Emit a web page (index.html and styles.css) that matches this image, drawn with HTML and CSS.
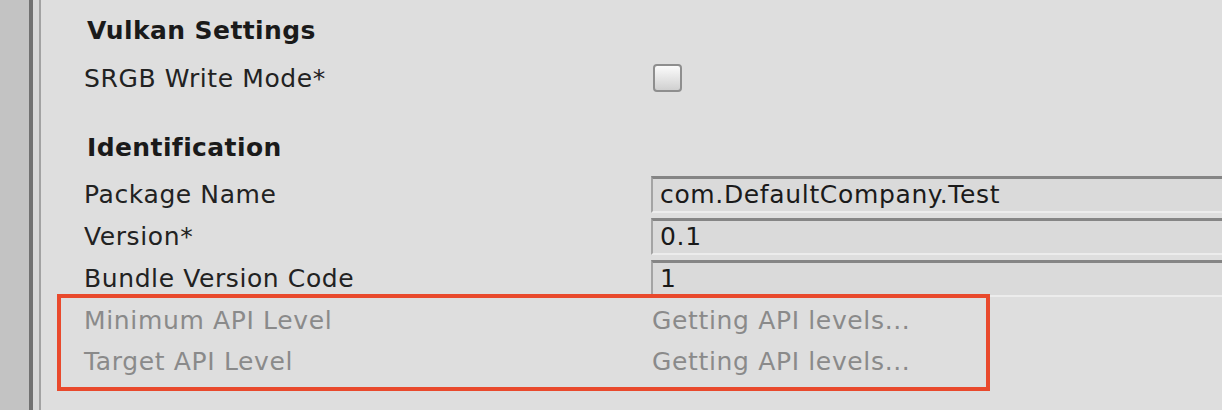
FILE: index.html
```html
<!DOCTYPE html>
<html lang="en">
<head>
<meta charset="utf-8">
<title>Player Settings</title>
<link rel="stylesheet" href="styles.css">
</head>
<body>
<div class="window">
  <div class="side"></div>
  <div class="split"></div>
  <main class="panel">
    <div class="row header-row first"><h2 class="header">Vulkan Settings</h2></div>
    <div class="row check-row">
      <span class="label">SRGB Write Mode*</span>
      <span class="value"><span class="checkbox"></span></span>
    </div>
    <div class="row header-row second"><h2 class="header">Identification</h2></div>
    <div class="row field-row pkg">
      <span class="label">Package Name</span>
      <span class="value"><span class="field">com.DefaultCompany.Test</span></span>
    </div>
    <div class="row field-row">
      <span class="label">Version*</span>
      <span class="value"><span class="field">0.1</span></span>
    </div>
    <div class="row field-row">
      <span class="label">Bundle Version Code</span>
      <span class="value"><span class="field">1</span></span>
    </div>
    <div class="disabled-group">
      <div class="row disabled-row">
        <span class="label">Minimum API Level</span>
        <span class="value text">Getting API levels...</span>
      </div>
      <div class="row disabled-row last">
        <span class="label">Target API Level</span>
        <span class="value text">Getting API levels...</span>
      </div>
    </div>
  </main>
</div>
</body>
</html>
```

FILE: styles.css
```css
html, body {
  margin: 0;
  padding: 0;
  width: 1222px;
  height: 410px;
  overflow: hidden;
  background: #dedede;
}

.window {
  display: flex;
  height: 410px;
  font-family: "DejaVu Sans", Verdana, sans-serif;
  color: #222222;
}

.side {
  width: 29px;
  flex: none;
  background: #c3c3c3;
  border-right: 4px solid #717171;
}

.split {
  width: 6px;
  flex: none;
  background: #d8d8d8;
  border-right: 2px solid #a2a2a2;
}

.panel {
  flex: 1;
  min-width: 0;
  padding-left: 43px;
  background: #dedede;
}

.row {
  display: flex;
  align-items: center;
  height: 42px;
  font-size: 25px;
  letter-spacing: 0.6px;
  white-space: nowrap;
}

.header-row.first {
  height: 60px;
}

.header-row.second {
  margin-top: 30px;
}

.header {
  margin: 0 0 0 3px;
  font-size: 25px;
  font-weight: bold;
  letter-spacing: 0.4px;
  color: #1a1a1a;
}

.check-row {
  height: 36px;
}

.pkg {
  margin-top: 5px;
}

.label {
  width: 567px;
  flex: none;
}

.value {
  flex: 1;
  min-width: 0;
  display: flex;
  align-items: center;
}

.checkbox {
  box-sizing: border-box;
  width: 29px;
  height: 28px;
  margin-left: 2px;
  border: 2px solid #8e8e8e;
  border-radius: 4px;
  background: linear-gradient(#fbfbfb, #d0d0d0);
}

.field {
  box-sizing: border-box;
  flex: none;
  display: flex;
  align-items: center;
  height: 37px;
  width: calc(100% + 20px);
  padding-left: 7px;
  background: #dadada;
  border: 2px solid #a4a4a4;
  border-top: 3px solid #858585;
  border-bottom: 2px solid #ececec;
  letter-spacing: 0.65px;
  color: #1a1a1a;
}

.disabled-group {
  position: relative;
}

.disabled-row {
  color: #8a8a8a;
  letter-spacing: 0.65px;
}

.disabled-row.last {
  height: 41px;
}

.text {
  padding-left: 1px;
}

.disabled-group::after {
  content: "";
  position: absolute;
  left: -27px;
  top: -5px;
  width: 933px;
  height: 97px;
  box-sizing: border-box;
  border: 4px solid #e9492c;
  pointer-events: none;
}
```
